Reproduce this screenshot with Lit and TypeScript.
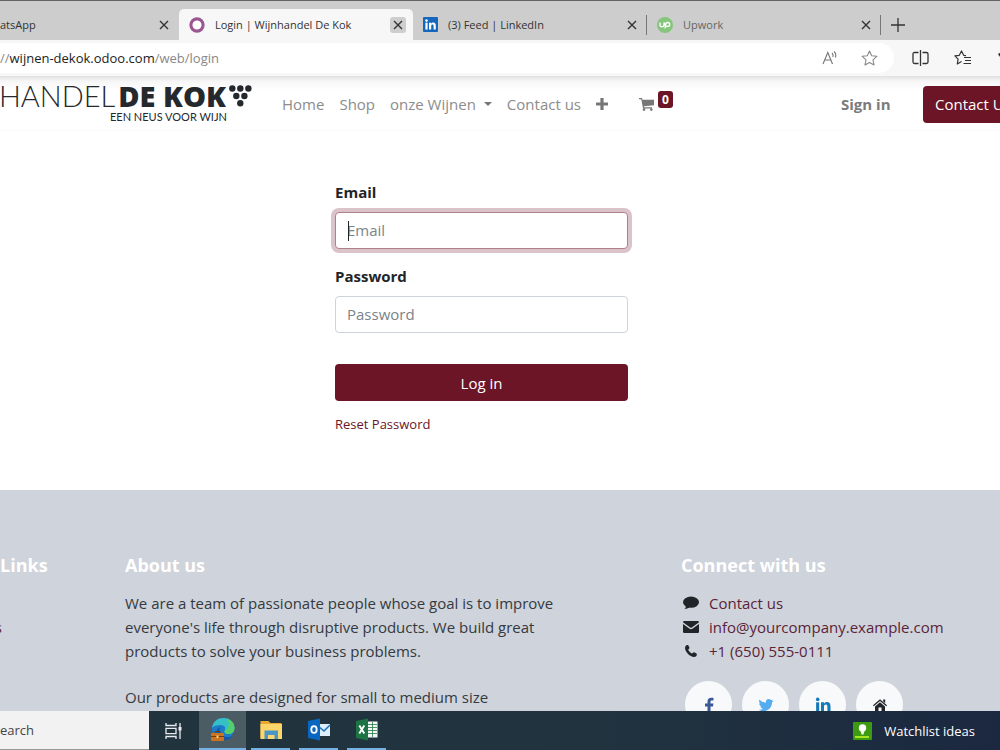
import { LitElement, html, css, svg } from "lit";
import { customElement } from "lit/decorators.js";

const closeIcon = html`<svg width="10" height="10" viewBox="0 0 10 10" aria-hidden="true">
  <path d="M1 1 9 9M9 1 1 9" stroke="#333" stroke-width="1.4" fill="none" />
</svg>`;

const odooIcon = html`<svg width="16" height="16" viewBox="0 0 16 16" aria-hidden="true">
  <circle cx="8" cy="8" r="6.1" fill="#fff" stroke="#9a5690" stroke-width="3.1" />
</svg>`;

const linkedinIcon = html`<svg width="15" height="15" viewBox="0 0 15 15" aria-hidden="true">
  <rect width="15" height="15" rx="1" fill="#1467bd" />
  <g fill="#fff">
    <circle cx="3.5" cy="3.6" r="1.3" />
    <rect x="2.4" y="5.7" width="2.2" height="6.9" />
    <path d="M6 5.7h2.1v1c.4-.7 1.2-1.2 2.1-1.2 2 0 2.6 1.3 2.6 3.2v3.9h-2.2V9.2c0-1-.2-1.7-1.1-1.7s-1.3.7-1.3 1.7v3.4H6z" />
  </g>
</svg>`;

const upworkIcon = html`<svg width="16" height="16" viewBox="0 0 16 16" aria-hidden="true">
  <circle cx="8" cy="8" r="8" fill="#86c67c" />
  <path d="M3 5.5v2.3a2 2 0 0 0 4 0V5.5c.6 2 1.800 4 3.700 4a2 2 0 1 0-2-2L8 11.500" fill="none" stroke="#fff" stroke-width="1.3" />
</svg>`;

const grapes = [
  [3.3, 3.5], [11.3, 3.5], [19.4, 3.5],
  [7.3, 11], [15.4, 11],
  [11.3, 18.3],
];

const grapeIcon = html`<svg width="23" height="22" viewBox="0 0 23 22" aria-hidden="true">
  ${grapes.map(([x, y]) => svg`<circle cx=${x} cy=${y} r="3.2" fill="#25282d" />`)}
</svg>`;

const contacts = [
  {
    text: "Contact us",
    icon: svg`<ellipse cx="8" cy="7.200" rx="8" ry="5.600" /><path d="M3 10c.2 2-.5 3-1.500 4 2.600 0 4.500-1 5.500-2.500z" />`,
  },
  {
    text: "info@yourcompany.example.com",
    icon: svg`<path d="M0 3.200Q0 2 1.200 2h13.600Q16 2 16 3.200L8.800 8.400q-.8.500-1.600 0z" /><path d="M0 5l6.600 4.700q1.400.9 2.800 0L16 5v7.800q0 1.200-1.200 1.200H1.200Q0 14 0 12.800z" />`,
  },
  {
    text: "+1 (650) 555-0111",
    icon: svg`<path d="M2.300 3.500C3 2.300 4 2 4.800 2c.5 0 1 1.200 1.700 2.800.3.700-1.200 1.500-1.200 2 0 .9 2.800 3.600 3.700 3.700.6 0 1.300-1.400 2-1.200 1.500.7 2.900 1.400 2.900 1.900 0 1.400-1 2.800-3 2.800C7.300 14 2 8.700 2 5z" />`,
  },
];

const socials = [
  {
    label: "Facebook",
    icon: svg`<path fill="#3b5998" d="M12.500.9v2.500h-1.600c-1.100 0-1.400.6-1.400 1.400v1.800h2.900l-.4 2.800H9.500V16H6.500V9.400H4V6.600h2.500V4.400C6.500 2 8 .7 10.200.7c1 0 1.900.1 2.300.2z" />`,
  },
  {
    label: "Twitter",
    icon: svg`<path fill="#55acee" d="M15.500 3.700c-.4.600-.9 1.100-1.500 1.500.2 5.200-3.700 9-8.500 9-1.800 0-3.400-.5-4.800-1.400 1.700.2 3.300-.3 4.500-1.300-1.400 0-2.500-.9-2.900-2.100h1.400C2.200 9.100 1.100 7.900 1.100 6.300c.4.200.9.400 1.400.4C1.100 5.700.7 4 1.500 2.500 3 4.400 5.300 5.600 7.900 5.700 7.300 2.400 10.900.9 13 3.100c.7-.1 1.400-.4 2-.7-.2.700-.7 1.300-1.300 1.700.6-.1 1.200-.2 1.800-.4z" />`,
  },
  {
    label: "LinkedIn",
    icon: svg`<g fill="#1679b8"><circle cx="2.700" cy="2.400" r="1.800" /><rect x="1.100" y="5.300" width="3.100" height="9.700" /><path d="M6 5.300h3v1.400c.6-1 1.600-1.600 3-1.600 2.300 0 3.500 1.500 3.500 4.200V15h-3.100V9.700c0-1.400-.5-2.200-1.600-2.200-1.200 0-1.800.8-1.800 2.200V15H6z" /></g>`,
  },
  {
    label: "Website",
    icon: svg`<path fill="#212529" d="M8 2.300 15 8.200l-.8 1L8 4.100 1.800 9.200 1 8.200zM11.200 2.500h2v3.600l-2-1.700zM8 5.200l5 4.200V14H9.500v-3.500h-3V14H3V9.400z" />`,
  },
];

const taskApps = [
  {
    label: "Microsoft Edge",
    active: true,
    icon: svg`<circle cx="13" cy="12" r="11" fill="#1c7cc9" />
      <path d="M2 11C3 4 8 1 13.500 1 20 1 24.500 5.500 24.500 11c0 4-3 6-6 6s-5-1.500-3.500-4c1-2-.5-5-4.500-5S3.500 9 2 11z" fill="#35c0c8" />
      <path d="M17 1.600c4.500 1.400 7.500 5 7.500 9.400 0 4-3 6-6 6s-5-1.500-3.500-4c4 0 5-6 2-11.400z" fill="#55cf6c" />
      <path d="M10 10c-2 5 2 10 8 10 2 0 3.500-.5 4.500-1-4 5-9 5-13 3-5-3-4-10 .5-12z" fill="#1557a5" />
      <rect x="1" y="16" width="13" height="8" rx="1" fill="#c87422" />
      <path d="M1 19.500h13M5 16v-1.500h5V16" stroke="#6f3a0c" stroke-width="1" fill="none" />
      <rect x="6.500" y="18.500" width="2" height="2.500" fill="#ffd36a" />`,
  },
  {
    label: "File Explorer",
    active: false,
    icon: svg`<path d="M2.500 4h8l2 2h11v15h-21z" fill="#e9a92f" /><rect x="2.500" y="7" width="21.500" height="15" fill="#fcd56b" />
      <path d="M6.500 22v-8.500h13.500V22h-3.500v-4h-6.500v4z" fill="#4a96c4" />`,
  },
  {
    label: "Outlook",
    active: false,
    icon: svg`<rect x="12" y="7" width="12" height="12" fill="#dceefb" /><path d="M12 9l6 5 6-6" fill="none" stroke="#1a6fb8" stroke-width="1.500" />
      <path d="M2 4l12-2.500v22L2 21z" fill="#0a67c1" /><ellipse cx="8" cy="12.500" rx="2.700" ry="3.400" fill="none" stroke="#fff" stroke-width="1.800" />`,
  },
  {
    label: "Excel",
    active: false,
    icon: svg`<rect x="13" y="4.500" width="10.500" height="16" fill="#f2f7f3" />
      <path d="M14 7.500h9M14 10.500h9M14 13.500h9M14 16.500h9M18.500 5v15" stroke="#237a48" stroke-width=".8" />
      <path d="M2 4l12-2.500v22L2 21z" fill="#1d7344" /><path d="M5.300 8.500l5 8M10.300 8.500l-5 8" stroke="#fff" stroke-width="1.900" />`,
  },
];

@customElement("browser-bar")
class BrowserBar extends LitElement {
  static styles = css`
    :host { display: block; font-family: "Open Sans", "Noto Sans", sans-serif; }
    button { border: 0; background: none; padding: 0; display: grid; place-items: center; }
    .tabs { display: flex; align-items: stretch; height: 40px; box-sizing: border-box; padding-top: 8px; border-top: 1px solid #656165; background: #cdcdcd; }
    .tab { box-sizing: border-box; width: 234px; flex: 0 0 auto; display: flex; align-items: center; gap: 10px; padding: 0 7px 0 10px; font-size: 11px; color: #333; }
    .first { width: 179px; padding-left: 0; }
    .active { background: #f7f7f7; border-radius: 5px 5px 0 0; }
    .title { flex: 1; white-space: nowrap; line-height: 20px; }
    .dim { color: #666; }
    .close { width: 16px; height: 16px; border-radius: 3px; }
    .active .close { background: #cecece; }
    .divided { background: linear-gradient(#777, #777) right center / 1px 20px no-repeat; }
    .plus { width: 34px; }
    .tools { display: flex; align-items: center; height: 36px; background: #f7f7f7; color: #888; }
    .address { flex: 1; min-width: 0; height: 30px; box-sizing: border-box; background: #fff; border-radius: 0 15px 15px 0; display: flex; align-items: center; gap: 22px; padding-right: 16px; }
    .url { flex: 1; font-size: 13px; line-height: 20px; }
    .host { color: #222; }
    .right { flex: 0 0 106px; display: flex; align-items: center; gap: 25px; padding-left: 18px; box-sizing: border-box; overflow: hidden; }
    .right button { flex: 0 0 auto; }
  `;
  render() {
    return html`
      <div class="tabs">
        <div class="tab first"><span class="title">atsApp</span><button class="close" aria-label="Close tab">${closeIcon}</button></div>
        <div class="tab active">${odooIcon}<span class="title">Login | Wijnhandel De Kok</span><button class="close" aria-label="Close tab">${closeIcon}</button></div>
        <div class="tab divided">${linkedinIcon}<span class="title">(3) Feed | LinkedIn</span><button class="close" aria-label="Close tab">${closeIcon}</button></div>
        <div class="tab divided">${upworkIcon}<span class="title dim">Upwork</span><button class="close" aria-label="Close tab">${closeIcon}</button></div>
        <button class="plus" aria-label="New tab">
          <svg width="14" height="14" viewBox="0 0 14 14"><path d="M7 0v14M0 7h14" stroke="#333" stroke-width="1.300" /></svg>
        </button>
      </div>
      <div class="tools">
        <div class="address">
          <span class="url">//<span class="host">wijnen-dekok.odoo.com</span>/web/login</span>
          <button aria-label="Read aloud">
            <svg width="17" height="16" viewBox="0 0 17 16" fill="none" stroke="#777" stroke-width="1.100"><path d="M1 14 5.800 2.500 10.500 14M2.700 10h6.200M10 3q1.500 1.500 1 4M12 1.500q2.500 2 1.500 6" /></svg>
          </button>
          <button aria-label="Add to favourites">
            <svg width="17" height="16" viewBox="0 0 17 16" fill="none" stroke="#888" stroke-width="1.100" stroke-linejoin="round"><path d="M8.500 1l2.200 4.700 5.100.6-3.800 3.500 1 5.100-4.500-2.500L4 14.900l1-5.100L1.200 6.300l5.100-.6z" /></svg>
          </button>
        </div>
        <div class="right">
          <button aria-label="Split screen">
            <svg width="17" height="16" viewBox="0 0 17 16" fill="none" stroke="#333" stroke-width="1.300"><path d="M8.500 0v16M6.500 2.500h-4Q1 2.500 1 4v8q0 1.500 1.500 1.500h4M10.500 2.500h4Q16 2.500 16 4v8q0 1.500-1.500 1.500h-4" /></svg>
          </button>
          <button aria-label="Favourites">
            <svg width="18" height="16" viewBox="0 0 18 16" fill="none" stroke="#333" stroke-width="1.200" stroke-linejoin="round"><path d="M12 5.600l-2.300-.3L7.500 1 5.300 5.300.9 5.900l3.200 3.200L3.300 14l4.200-2.400M10 7.500h7M11 10.500h6M9.500 13.500H17" /></svg>
          </button>
          <button aria-label="Collections">
            <svg width="16" height="16" viewBox="0 0 16 16" fill="none" stroke="#333" stroke-width="1.500"><path d="M1 4q3-2 6 0v4q-4 0-6-4z" fill="#333" stroke="none" /></svg>
          </button>
        </div>
      </div>
    `;
  }
}

@customElement("site-header")
class SiteHeader extends LitElement {
  static styles = css`
    :host { display: block; font-family: "Open Sans", "Noto Sans", sans-serif; }
    .bar { display: flex; height: 55px; box-sizing: border-box; background: linear-gradient(#e0e0e0, #f6f6f6 5px, #fff 14px); border-bottom: 1px solid #fafafa; overflow: hidden; }
    a { color: inherit; text-decoration: none; white-space: nowrap; }
    .logo { flex: 0 0 252px; display: flex; flex-direction: column; align-items: flex-end; padding-top: 7px; color: #25282d; font-family: Lato, sans-serif; overflow: hidden; }
    .name { display: flex; align-items: center; gap: 3px; font-size: 29px; line-height: 26px; font-weight: 300; }
    .bold { font-family: "Open Sans", sans-serif; font-weight: 800; }
    .motto { font-size: 11px; line-height: 16px; padding-right: 25px; }
    .nav { flex: 1; display: flex; align-items: center; gap: 15px; padding: 2px 0 0 30px; font-size: 15px; line-height: 24px; color: #8c8c8c; }
    .drop { display: flex; align-items: center; gap: 8px; }
    .cart { display: flex; align-items: center; gap: 4px; padding-left: 16px; }
    .count { margin-bottom: 9px; width: 15px; border-radius: 3px; background: #6b1526; color: #fff; font-size: 12px; font-weight: 700; line-height: 17px; text-align: center; }
    .right { flex: 0 0 159px; display: flex; align-items: center; justify-content: space-between; padding-top: 2px; font-size: 15px; overflow: hidden; }
    .sign { flex: 0 0 82px; font-weight: 700; color: #7b7b7b; }
    .cta { flex: 0 0 auto; height: 37px; border: 0; border-radius: 4px; background: #6b1526; color: #fff; padding: 0 12px; font: inherit; white-space: nowrap; }
  `;
  render() {
    return html`
      <header class="bar">
        <a class="logo" href="#">
          <span class="name"><span>NHANDEL</span><span class="bold">DE KOK</span>${grapeIcon}</span>
          <span class="motto">EEN NEUS VOOR WIJN</span>
        </a>
        <nav class="nav">
          <a href="#">Home</a>
          <a href="#">Shop</a>
          <a href="#" class="drop">onze Wijnen <svg width="8" height="4" viewBox="0 0 8 4"><path d="M0 0h8L4 4z" fill="#777" /></svg></a>
          <a href="#">Contact us</a>
          <a href="#" aria-label="More"><svg width="12" height="12" viewBox="0 0 12 12"><path d="M6 0v12M0 6h12" stroke="#777" stroke-width="3.200" /></svg></a>
          <a href="#" class="cart" aria-label="Cart">
            <svg width="15" height="14" viewBox="0 0 15 14"><path d="M0 1h3l.5 1.700H15v5.500L5 9.300l.2 1H13v1.200H4L2.300 2.300H0z" fill="#777" /><circle cx="5" cy="12.600" r="1.300" fill="#777" /><circle cx="12.300" cy="12.600" r="1.300" fill="#777" /></svg>
            <span class="count">0</span>
          </a>
        </nav>
        <div class="right"><a class="sign" href="#">Sign in</a><button class="cta">Contact Us</button></div>
      </header>
    `;
  }
}

@customElement("login-form")
class LoginForm extends LitElement {
  static styles = css`
    :host { display: flex; justify-content: center; padding: 49px 37px 54px 0; font-family: "Open Sans", "Noto Sans", sans-serif; font-size: 15px; line-height: 24px; }
    .form { width: 293px; display: flex; flex-direction: column; }
    .field { display: flex; flex-direction: column; gap: 8px; margin-bottom: 15px; }
    label { font-weight: 700; color: #212529; font-size: 15px; }
    input { box-sizing: border-box; width: 100%; height: 37px; padding: 0 11px 1px; border: 1px solid #ced4da; border-radius: 4px; background: #fff; font: inherit; display: block; outline: 0; }
    input::placeholder { color: #7b838a; opacity: 1; }
    .box { position: relative; }
    .focused { border-color: #b07f8c; box-shadow: 0 0 0 4px #dac4ca; }
    .caret { position: absolute; left: 13px; top: 9px; width: 1px; height: 20px; background: #222; }
    .submit { height: 37px; margin-top: 16px; border: 0; border-radius: 4px; background: #6b1526; color: #fff; font: inherit; }
    .reset { align-self: flex-start; margin-top: 11px; font-size: 13px; color: #6b1526; text-decoration: none; }
  `;
  render() {
    return html`
      <form class="form" @submit=${(e: Event) => e.preventDefault()}>
        <div class="field">
          <label for="email">Email</label>
          <div class="box"><input class="focused" id="email" type="text" placeholder="Email" /><span class="caret"></span></div>
        </div>
        <div class="field">
          <label for="password">Password</label>
          <input id="password" type="password" placeholder="Password" />
        </div>
        <button class="submit">Log in</button>
        <a class="reset" href="#">Reset Password</a>
      </form>
    `;
  }
}

@customElement("site-footer")
class SiteFooter extends LitElement {
  static styles = css`
    :host { display: grid; grid-template-columns: 125px minmax(0, 1fr) 319px; padding-top: 63px; background: #cfd3db; color: #343a40; font-family: "Open Sans", "Noto Sans", sans-serif; font-size: 15px; line-height: 24px; }
    h5 { margin: 0 0 14px; font-size: 18px; line-height: 24px; font-weight: 700; color: #fff; }
    p { margin: 0 0 22px; max-width: 440px; }
    a { color: #5c2338; text-decoration: none; }
    .links { overflow: hidden; }
    .item { display: flex; justify-content: flex-end; width: 2px; margin-top: 38px; overflow: hidden; }
    .row { display: flex; align-items: center; gap: 10px; padding-left: 2px; }
    .row svg { fill: #212529; }
    .socials { display: flex; gap: 10px; margin: 18px 0 0 4px; }
    .circle { width: 47px; height: 47px; border-radius: 50%; background: #f8f9fa; display: grid; place-items: center; }
  `;
  render() {
    return html`
      <section class="links"><h5>Links</h5><a class="item" href="#">s</a></section>
      <section>
        <h5>About us</h5>
        <p>We are a team of passionate people whose goal is to improve everyone's life through disruptive products. We build great products to solve your business problems.</p>
        <p>Our products are designed for small to medium size</p>
      </section>
      <section>
        <h5>Connect with us</h5>
        ${contacts.map((c) => html`<div class="row"><svg width="16" height="16" viewBox="0 0 16 16">${c.icon}</svg><a href="#">${c.text}</a></div>`)}
        <div class="socials">
          ${socials.map((s) => html`<a class="circle" href="#" aria-label=${s.label}><svg width="16" height="16" viewBox="0 0 16 16">${s.icon}</svg></a>`)}
        </div>
      </section>
    `;
  }
}

@customElement("task-bar")
class TaskBar extends LitElement {
  static styles = css`
    :host { display: flex; height: 39px; background: linear-gradient(90deg, #21343d, #21333f 60%, #1b2840); color: #fff; font-family: "Open Sans", "Noto Sans", sans-serif; font-size: 13px; }
    button { border: 0; background: none; padding: 0; color: inherit; font: inherit; display: grid; place-items: center; }
    .search { box-sizing: border-box; width: 149px; border: 0; border-bottom: 1px solid #999; border-radius: 0; padding: 0; background: #f2f2f2; font: inherit; color: #444; outline: 0; }
    .search::placeholder { color: #444; opacity: 1; }
    .view { width: 50px; }
    .apps { display: flex; gap: 9px; flex: 1; }
    .app { box-sizing: border-box; width: 39px; border-bottom: 2px solid #76b1e6; }
    .app.active { width: 47px; margin-right: -4px; background: #4c5c65; }
    .news { display: flex; align-items: center; gap: 11px; padding-right: 25px; }
  `;
  render() {
    return html`
      <input class="search" type="text" placeholder="earch" aria-label="Search" />
      <button class="view" aria-label="Task view">
        <svg width="18" height="16" viewBox="0 0 18 16" fill="none" stroke="#e8ecee" stroke-width="1.300"><path d="M1 0v2.500h10V0M1 16v-2.500h10V16M1 5.300h10v5.400H1zM15 0v16" /><rect x="13.500" y="4" width="3" height="3.500" fill="#e8ecee" stroke="none" /></svg>
      </button>
      <div class="apps">
        ${taskApps.map((a) => html`<button class="app ${a.active ? "active" : ""}" aria-label=${a.label}><svg width="26" height="25" viewBox="0 0 26 25">${a.icon}</svg></button>`)}
      </div>
      <button class="news">
      <svg width="20" height="18" viewBox="0 0 20 18"><rect width="19" height="18" rx="1" fill="#3d9b12" /><rect x="2" y="14" width="14" height="2" fill="#a5e61e" /><circle cx="9.500" cy="6" r="3.700" fill="#fff" /><path d="M7.500 8.500h4l-1 4h-2z" fill="#f2ffe5" /></svg>
      <span>Watchlist ideas</span></button>
    `;
  }
}

@customElement("app-root")
class AppRoot extends LitElement {
  static styles = css`
    :host { display: flex; flex-direction: column; height: 100vh; background: #fff; overflow: hidden; }
    .page { flex: 1; min-height: 0; overflow: hidden; }
  `;
  render() {
    return html`
      <browser-bar></browser-bar>
      <div class="page">
        <site-header></site-header>
        <login-form></login-form>
        <site-footer></site-footer>
      </div>
      <task-bar></task-bar>
    `;
  }
}
